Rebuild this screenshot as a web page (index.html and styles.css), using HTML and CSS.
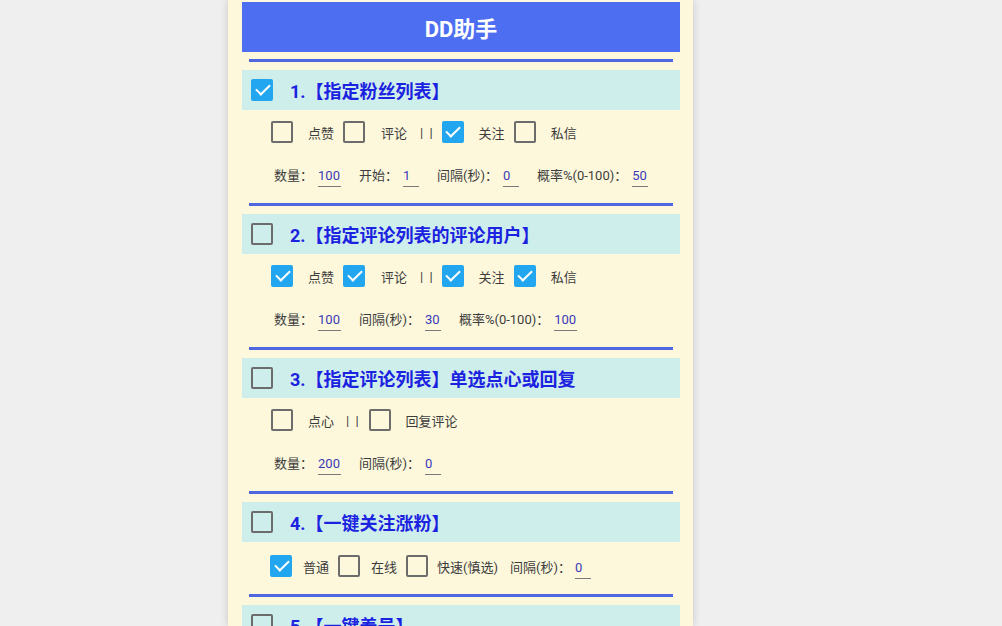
FILE: index.html
```html
<!DOCTYPE html>
<html lang="zh">
<head>
    <meta charset="UTF-8">
    <meta name="viewport" content="width=device-width, initial-scale=1.0">
    <title>DD助手</title>
    <link rel="stylesheet" href="styles.css">
</head>
<body>
    <div class="phone">
        <div class="appbar">DD助手</div>

        <div class="section">
            <div class="divider"></div>
            <div class="sec-head">
                <span class="cb on"></span>
                <span class="sec-title">1.【指定粉丝列表】</span>
            </div>
            <div class="opts">
                <label class="opt"><span class="cb"></span>点赞</label>
                <label class="opt"><span class="cb"></span>评论</label>
                <span class="sep">| |</span>
                <label class="opt"><span class="cb on"></span>关注</label>
                <label class="opt"><span class="cb"></span>私信</label>
            </div>
            <div class="inputs">
                <span class="field">数量：<span class="val">100</span></span>
                <span class="field">开始：<span class="val">1</span></span>
                <span class="field">间隔(秒)：<span class="val">0</span></span>
                <span class="field">概率%(0-100)：<span class="val">50</span></span>
            </div>
        </div>

        <div class="section">
            <div class="divider"></div>
            <div class="sec-head">
                <span class="cb"></span>
                <span class="sec-title">2.【指定评论列表的评论用户】</span>
            </div>
            <div class="opts">
                <label class="opt"><span class="cb on"></span>点赞</label>
                <label class="opt"><span class="cb on"></span>评论</label>
                <span class="sep">| |</span>
                <label class="opt"><span class="cb on"></span>关注</label>
                <label class="opt"><span class="cb on"></span>私信</label>
            </div>
            <div class="inputs">
                <span class="field">数量：<span class="val">100</span></span>
                <span class="field">间隔(秒)：<span class="val">30</span></span>
                <span class="field">概率%(0-100)：<span class="val">100</span></span>
            </div>
        </div>

        <div class="section">
            <div class="divider"></div>
            <div class="sec-head">
                <span class="cb"></span>
                <span class="sec-title">3.【指定评论列表】单选点心或回复</span>
            </div>
            <div class="opts">
                <label class="opt"><span class="cb"></span>点心</label>
                <span class="sep wide">| |</span>
                <label class="opt"><span class="cb"></span>回复评论</label>
            </div>
            <div class="inputs">
                <span class="field">数量：<span class="val">200</span></span>
                <span class="field">间隔(秒)：<span class="val">0</span></span>
            </div>
        </div>

        <div class="section short">
            <div class="divider"></div>
            <div class="sec-head">
                <span class="cb"></span>
                <span class="sec-title">4.【一键关注涨粉】</span>
            </div>
            <div class="opts compact">
                <label class="opt"><span class="cb on"></span>普通</label>
                <label class="opt"><span class="cb"></span>在线</label>
                <label class="opt"><span class="cb"></span>快速(慎选)</label>
                <span class="field">间隔(秒)：<span class="val">0</span></span>
            </div>
        </div>

        <div class="section">
            <div class="divider"></div>
            <div class="sec-head">
                <span class="cb"></span>
                <span class="sec-title">5.【一键养号】</span>
            </div>
        </div>
    </div>
</body>
</html>
```

FILE: styles.css
```css
html, body {
    margin: 0;
    height: 626px;
    overflow: hidden;
}
body {
    background-color: #efefef;
    font-family: Roboto, "Noto Sans CJK SC", sans-serif;
    color: #3c3c3c;
}
.phone {
    width: 465px;
    height: 626px;
    margin-left: 228px;
    padding: 2px 13px 0 14px;
    box-sizing: border-box;
    background-color: #fdf8dc;
    box-shadow: 0 0 8px rgba(0,0,0,0.18);
    overflow: hidden;
}
.appbar {
    height: 50px;
    background-color: #4d6ef1;
    color: #fff;
    font-size: 22px;
    font-weight: bold;
    display: flex;
    align-items: center;
    justify-content: center;
}
.section {
    padding-bottom: 7px;
}
.section.short {
    padding-bottom: 6px;
}
.divider {
    height: 3px;
    margin: 7px 7px 8px 7px;
    background-color: #4f68e2;
}
.sec-head {
    height: 40px;
    background-color: #ceeeeb;
    display: flex;
    align-items: center;
    padding-left: 9px;
}
.sec-title {
    margin-left: 17px;
    font-size: 18px;
    font-weight: bold;
    color: #1b22e0;
}
.cb {
    position: relative;
    display: inline-block;
    flex: none;
    width: 22px;
    height: 22px;
    box-sizing: border-box;
    border: 2.5px solid #6c6c6c;
    border-radius: 2px;
}
.cb.on {
    background-color: #22a6ef;
    border-color: #22a6ef;
}
.cb.on::after {
    content: "";
    position: absolute;
    left: 5.5px;
    top: -0.5px;
    width: 6px;
    height: 12px;
    border: solid #fff;
    border-width: 0 2px 2px 0;
    transform: rotate(45deg);
}
.opts {
    height: 30px;
    margin-top: 7px;
    padding-left: 29px;
    display: flex;
    align-items: center;
    font-size: 13px;
}
.opt {
    display: flex;
    align-items: center;
    gap: 15px;
    margin-right: 9px;
}
.opt:nth-child(2) {
    gap: 16px;
}
.sep {
    word-spacing: 3px;
    margin: 0 9px 0 4px;
}
.sep.wide {
    margin: 0 10px 0 3px;
}
.opts.compact {
    margin-top: 9px;
    padding-left: 28px;
}
.opts.compact .opt {
    gap: 11px;
    margin-right: 9px;
}
.opts.compact .opt:nth-child(3) {
    gap: 9px;
    margin-right: 12px;
}
.opts.compact .val {
    margin-left: 4px;
}
.inputs {
    height: 30px;
    margin-top: 12px;
    padding-left: 32px;
    display: flex;
    align-items: center;
    font-size: 13px;
}
.field {
    display: flex;
    align-items: center;
    margin-right: 18px;
}
.val {
    display: inline-block;
    min-width: 15px;
    margin-left: 5px;
    padding: 5px 1px 3px 0;
    line-height: 15px;
    color: #3a3ab8;
    border-bottom: 1.5px solid #7a7a7a;
    transform: translateY(1px);
}
```
